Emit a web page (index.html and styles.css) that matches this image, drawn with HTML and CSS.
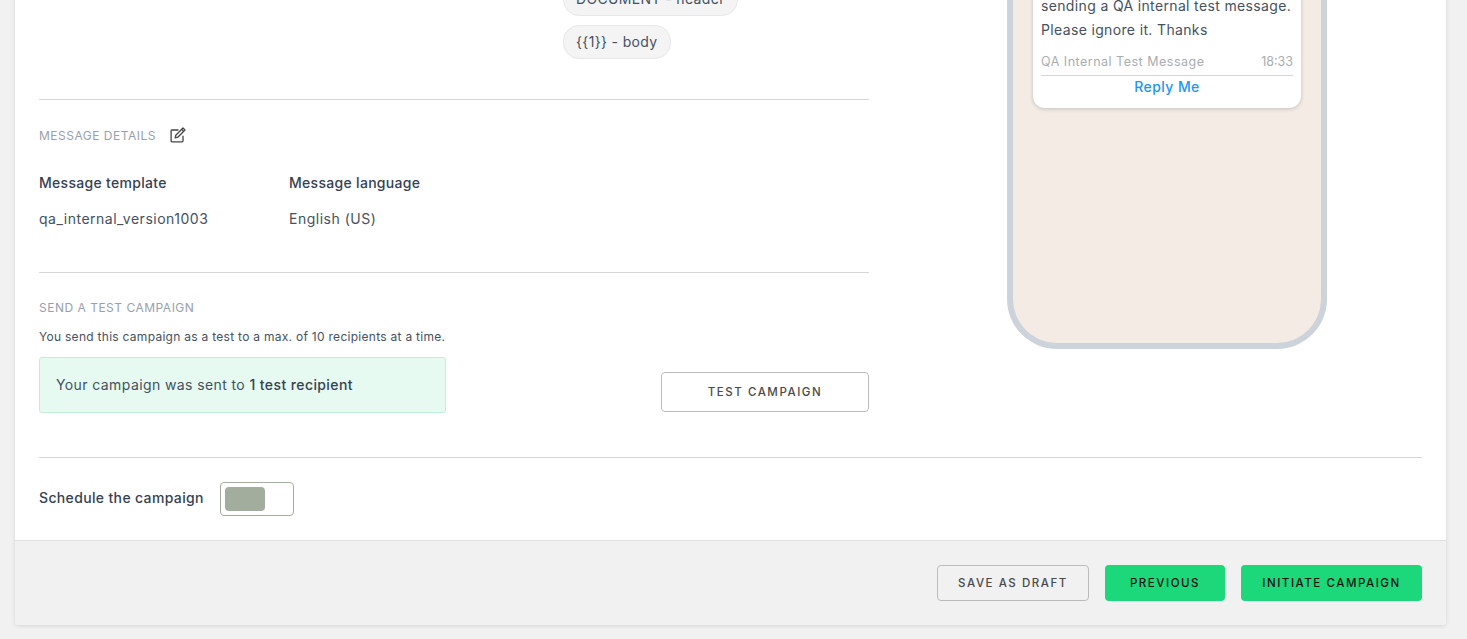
FILE: index.html
```html
<!DOCTYPE html>
<html lang="en">
<head>
  <meta charset="UTF-8">
  <title>Review campaign</title>
  <link rel="stylesheet" href="styles.css">
</head>
<body>
  <div class="card">
    <div class="card-body">
      <div class="top-row">
        <div class="details">
          <div class="section section-summary">
            <div class="chips">
              <span class="chip">DOCUMENT - header</span>
              <span class="chip">{{1}} - body</span>
            </div>
          </div>

          <div class="section section-message">
            <div class="section-title">
              MESSAGE DETAILS
              <svg class="edit-icon" width="16" height="16" viewBox="0 0 16 16" fill="none" stroke="#444" stroke-width="1.3" stroke-linejoin="round" stroke-linecap="round">
                <path d="M13 9.2V14a.8.8 0 0 1-.8.8H1.9a.8.8 0 0 1-.8-.8V3.8a.8.8 0 0 1 .8-.8H8"/>
                <path d="M5.8 8.2 13 1l2 2-7.2 7.2-2.6.6z"/>
                <path d="M11.6 2.4l2 2"/>
              </svg>
            </div>
            <div class="info-row">
              <div class="info-col">
                <div class="info-label">Message template</div>
                <div class="info-value">qa_internal_version1003</div>
              </div>
              <div class="info-col">
                <div class="info-label">Message language</div>
                <div class="info-value">English (US)</div>
              </div>
            </div>
          </div>

          <div class="section section-test">
            <div class="section-title">SEND A TEST CAMPAIGN</div>
            <p class="test-note">You send this campaign as a test to a max. of 10 recipients at a time.</p>
            <div class="test-row">
              <div class="alert">Your campaign was sent to <strong>1 test recipient</strong></div>
              <button class="btn btn-outline btn-test">TEST CAMPAIGN</button>
            </div>
          </div>
        </div>

        <div class="phone">
          <div class="bubble">
            <div class="bubble-text">sending a QA internal test message.<br>Please ignore it. Thanks</div>
            <div class="bubble-meta">
              <span class="bubble-name">QA Internal Test Message</span>
              <span>18:33</span>
            </div>
            <div class="bubble-reply">Reply Me</div>
          </div>
        </div>
      </div>

      <div class="schedule">
        <span class="schedule-label">Schedule the campaign</span>
        <span class="toggle"><span class="toggle-knob"></span></span>
      </div>
    </div>

    <div class="card-footer">
      <button class="btn btn-outline btn-draft">SAVE AS DRAFT</button>
      <button class="btn btn-green btn-prev">PREVIOUS</button>
      <button class="btn btn-green btn-start">INITIATE CAMPAIGN</button>
    </div>
  </div>
</body>
</html>
```

FILE: styles.css
```css
/* page is shown scrolled down, so the card starts above the window */
html, body {
  height: 100%;
}
body {
  margin: 0;
  overflow: hidden;
  background-color: #f1f1f1;
  font-family: Inter, "Liberation Sans", sans-serif;
  color: #455161;
}
.card {
  width: 1431px;
  margin: -20px 0 0 15px;
  background-color: #ffffff;
  border-radius: 4px;
  box-shadow: 0 1px 4px rgba(0, 0, 0, 0.12);
}
.card-body {
  padding: 0 24px;
}
.top-row {
  display: flex;
  height: 478px;
  border-bottom: 1px solid #d6d6d6;
  box-sizing: border-box;
}
.details {
  width: 830px;
}
.section {
  border-bottom: 1px solid #d6d6d6;
}
.section:last-child {
  border-bottom: none;
}

/* chips */
.section-summary {
  height: 118px;
  box-sizing: border-box;
}
.chips {
  display: flex;
  flex-direction: column;
  align-items: flex-start;
  gap: 9px;
  margin: 2px 0 0 524px;
}
.chip {
  box-sizing: border-box;
  height: 34px;
  line-height: 32px;
  padding: 0 12px;
  font-size: 14px;
  letter-spacing: 0.35px;
  background-color: #f4f4f5;
  border: 1px solid #e8e8e8;
  border-radius: 16px;
}

/* message details */
.section-message {
  height: 173px;
  box-sizing: border-box;
  padding-top: 26px;
}
.section-title {
  display: flex;
  align-items: center;
  height: 18px;
  font-size: 12px;
  color: #98a1ab;
  letter-spacing: 0.5px;
}
.edit-icon {
  margin-left: 14px;
}
.info-row {
  display: flex;
  margin-top: 29px;
}
.info-col {
  width: 250px;
}
.info-label {
  font-size: 14px;
  font-weight: 500;
  line-height: 20px;
  letter-spacing: 0.3px;
  color: #364152;
}
.info-value {
  margin-top: 16px;
  font-size: 14px;
  line-height: 20px;
  letter-spacing: 0.5px;
}

/* test campaign */
.section-test {
  padding-top: 25px;
}
.test-note {
  margin: 13px 0 0;
  font-size: 12px;
  line-height: 16px;
  letter-spacing: 0.28px;
}
.test-row {
  display: flex;
  justify-content: space-between;
  align-items: flex-end;
  margin-top: 12px;
}
.alert {
  box-sizing: border-box;
  width: 407px;
  height: 56px;
  line-height: 53px;
  padding-left: 16px;
  font-size: 14px;
  letter-spacing: 0.4px;
  background-color: #e6faf1;
  border: 1px solid #bfeedb;
  border-radius: 3px;
}
.alert strong {
  font-weight: 500;
  letter-spacing: 0.4px;
  color: #364152;
}

/* buttons */
.btn {
  box-sizing: border-box;
  height: 36px;
  padding: 0;
  font-family: inherit;
  font-size: 11.5px;
  font-weight: 500;
  letter-spacing: 1.55px;
  border-radius: 4px;
  cursor: pointer;
}
.btn-outline {
  color: #4a4a4a;
  background-color: transparent;
  border: 1px solid #bcbcbc;
}
.btn-green {
  color: #111111;
  background-color: #1dd87b;
  border: none;
}
.btn-test {
  width: 208px;
  height: 40px;
  margin-bottom: 1px;
}
.btn-draft {
  width: 152px;
}
.btn-prev {
  width: 120px;
}
.btn-start {
  width: 181px;
}

/* phone preview */
.phone {
  box-sizing: border-box;
  width: 320px;
  height: 369px;
  margin-left: 138px;
  padding: 0 20px;
  background-color: #f3ebe4;
  border: 6px solid #cdd3da;
  border-top: none;
  border-radius: 0 0 50px 50px;
}
.bubble {
  box-sizing: border-box;
  height: 128px;
  padding: 14px 8px 0;
  background-color: #ffffff;
  border-radius: 0 0 12px 12px;
  box-shadow: 0 1px 4px rgba(0, 0, 0, 0.18);
}
.bubble-text {
  font-size: 14px;
  line-height: 24px;
  letter-spacing: 0.35px;
}
.bubble-meta {
  display: flex;
  justify-content: space-between;
  margin-top: 12px;
  padding-bottom: 5px;
  font-size: 12.5px;
  line-height: 16px;
  color: #a9adb2;
  border-bottom: 1px solid #d6d6d6;
}
.bubble-name {
  letter-spacing: 0.5px;
}
.bubble-reply {
  margin-top: 2px;
  text-align: center;
  font-size: 14px;
  font-weight: 500;
  line-height: 18px;
  letter-spacing: 0.4px;
  color: #2196f3;
}

/* schedule toggle */
.schedule {
  display: flex;
  align-items: center;
  height: 82px;
  gap: 16px;
}
.schedule-label {
  padding-bottom: 3px;
  font-size: 14px;
  font-weight: 500;
  letter-spacing: 0.35px;
  color: #364152;
}
.toggle {
  box-sizing: border-box;
  width: 74px;
  height: 34px;
  padding: 4px;
  border: 1px solid #a3ad9d;
  border-radius: 4px;
}
.toggle-knob {
  display: block;
  width: 40px;
  height: 24px;
  background-color: #a3ad9d;
  border-radius: 4px;
}

/* footer */
.card-footer {
  display: flex;
  justify-content: flex-end;
  align-items: center;
  gap: 16px;
  height: 85px;
  padding: 0 24px;
  box-sizing: border-box;
  background-color: #f1f1f1;
  border-top: 1px solid #e0e0e0;
  border-radius: 0 0 4px 4px;
}
```
